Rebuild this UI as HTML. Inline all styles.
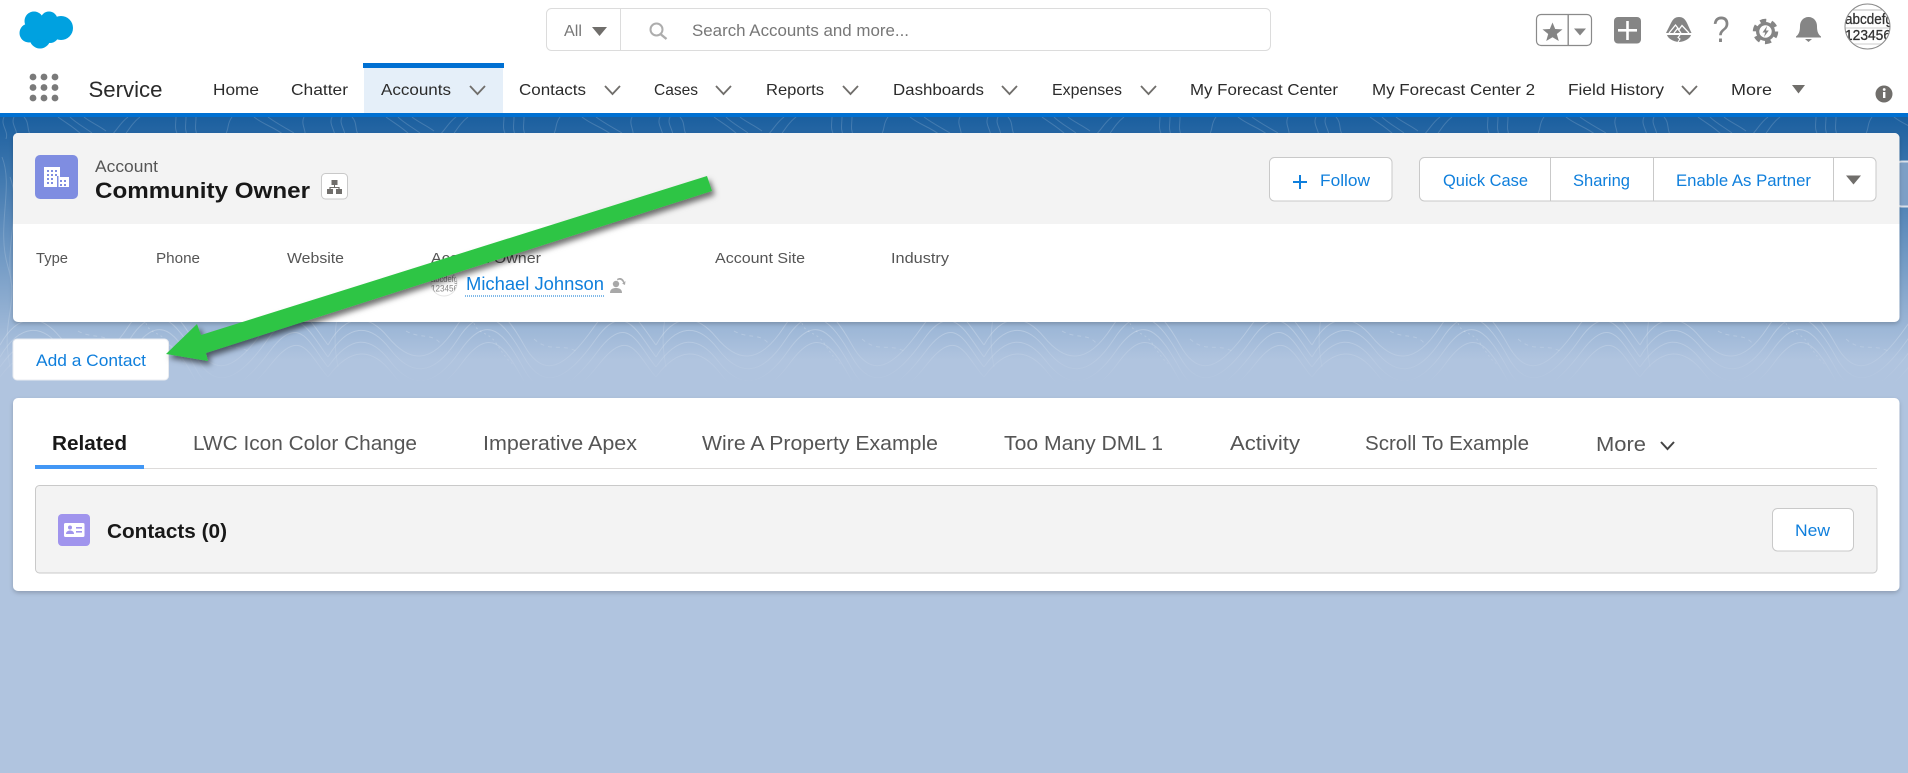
<!DOCTYPE html>
<html lang="en">
<head>
<meta charset="utf-8">
<title>Community Owner | Account | Service</title>
<style>
html,body{margin:0;padding:0;width:1908px;height:773px;overflow:hidden;background:#b0c4df}
svg{display:block}
text{font-family:"Liberation Sans",sans-serif;white-space:pre}
.nav{font-size:16px;fill:#2b2b2b}
.lab{font-size:15px;fill:#555}
.btn{font-size:16.5px;fill:#0f7fdc}
.tab{font-size:20px;fill:#555}
.b{font-weight:bold;fill:#181818}
.chev{fill:none;stroke:#706e6b;stroke-width:1.8}
.ico{fill:#858585}
</style>
</head>
<body>
<svg width="1908" height="773" viewBox="0 0 1908 773" xmlns="http://www.w3.org/2000/svg">
<defs>
<linearGradient id="bg" gradientUnits="userSpaceOnUse" x1="0" y1="117" x2="0" y2="360">
<stop offset="0" stop-color="#1b5f9f"/><stop offset="1" stop-color="#b0c4df"/>
</linearGradient>
<linearGradient id="fade" gradientUnits="userSpaceOnUse" x1="0" y1="117" x2="0" y2="385">
<stop offset="0" stop-color="#fff"/><stop offset=".8" stop-color="#fff"/><stop offset="1" stop-color="#000"/>
</linearGradient>
<mask id="fm" maskUnits="userSpaceOnUse" x="0" y="117" width="1908" height="270"><rect x="0" y="117" width="1908" height="270" fill="url(#fade)"/></mask>
<pattern id="topo" patternUnits="userSpaceOnUse" x="0" y="117" width="328" height="270">
<g fill="none" stroke="#fff" stroke-width="1">
<path stroke-opacity=".16" d="M4 0C0 8 9 14 6 22M14 0C10 8 20 14 16 24M24 0C30 6 26 14 32 20M58 0C66 6 74 10 82 18M70 0C76 6 84 10 92 16M84 0C90 5 98 8 106 14M128 0C120 6 118 12 110 20M140 0C132 6 128 14 122 22M176 0C176 6 174 12 178 18M186 0C186 8 184 12 188 20M196 0C196 8 194 12 198 20M232 0C226 8 230 12 224 20M254 0C264 8 274 10 284 18M268 0C276 6 284 10 294 16M304 0C300 8 308 14 304 22"/>
<path stroke-opacity=".16" d="M2 40C14 70 -4 110 8 150S0 200 10 250M10 60C22 90 4 130 12 170"/>
<g stroke-opacity=".24">
<path d="M0 240C20 206 42 206 62 232S104 262 130 222S176 204 196 240S240 262 268 222S310 216 328 240"/>
<path d="M0 250C22 218 42 218 62 244S104 274 132 234S176 216 196 252S240 274 270 234S310 228 328 250"/>
<path d="M0 260C22 230 44 230 64 256S106 284 134 246S176 228 196 264S242 284 272 246S310 240 328 260"/>
<path d="M0 228C18 196 40 196 60 220S102 250 128 210S176 192 196 228S238 250 266 210S310 204 328 228"/>
</g>
<path stroke-opacity=".22" d="M78 214C92 222 104 216 112 226M206 222C222 236 232 226 248 234" stroke-dasharray="4 4"/>
<path stroke-opacity=".22" d="M146 206C150 218 160 214 168 226S180 244 186 248" stroke-dasharray="2 3"/>
</g>
</pattern>
<filter id="sh" x="-2%" y="-10%" width="104%" height="125%"><feDropShadow dx="0" dy="2" stdDeviation="2" flood-color="#000" flood-opacity=".2"/></filter>
<filter id="ash" x="-10%" y="-20%" width="120%" height="140%"><feDropShadow dx="3" dy="4" stdDeviation="3" flood-color="#000" flood-opacity=".55"/></filter>
<clipPath id="av1"><circle cx="1867.5" cy="26.5" r="22"/></clipPath>
<clipPath id="av2"><circle cx="444" cy="283" r="13"/></clipPath>
</defs>

<!-- page background -->
<rect x="0" y="117" width="1908" height="656" fill="#b0c4df"/>
<rect x="0" y="117" width="1908" height="243" fill="url(#bg)"/>
<rect x="0" y="117" width="1908" height="270" fill="url(#topo)" mask="url(#fm)"/>

<!-- global header -->
<rect x="0" y="0" width="1908" height="113" fill="#fff"/>
<rect x="0" y="113" width="1908" height="4" fill="#0070d2"/>
<g fill="#00a1e0">
<circle cx="29" cy="33" r="9.5"/><circle cx="34" cy="21" r="9.5"/><circle cx="49" cy="20" r="8.5"/><circle cx="61" cy="28" r="12"/><circle cx="40" cy="38" r="10.5"/><circle cx="50" cy="34" r="9"/><circle cx="42" cy="28" r="12"/>
</g>

<!-- search -->
<rect x="546.5" y="8.5" width="724" height="42" rx="5" fill="#fff" stroke="#dcdcdc"/>
<path d="M620.5 8.500V50.500" stroke="#dcdcdc"/>
<text x="564" y="36" font-size="16" fill="#777" textLength="18" lengthAdjust="spacingAndGlyphs">All</text>
<polygon points="592,27 607,27 599.5,36" fill="#706e6b"/>
<circle cx="656.500" cy="29.500" r="6" fill="none" stroke="#adadad" stroke-width="2"/>
<line x1="661" y1="34.500" x2="666.500" y2="39" stroke="#adadad" stroke-width="2.4"/>
<text x="692" y="36" font-size="16.5" fill="#777" textLength="217" lengthAdjust="spacingAndGlyphs">Search Accounts and more...</text>

<!-- header actions -->
<rect x="1536.5" y="14.5" width="55" height="31" rx="4.5" fill="#fff" stroke="#8a8a8a" stroke-width="1.2"/>
<rect x="1567.5" y="14.5" width="1.4" height="31" fill="#8a8a8a"/>
<polygon class="ico" points="1552.500,22.500 1555.200,29 1562.500,29.400 1556.800,34 1558.800,41 1552.500,37.200 1546.200,41 1548.200,34 1542.500,29.400 1549.800,29"/>
<polygon class="ico" points="1574,28.500 1586,28.500 1580,35.500"/>
<rect class="ico" x="1614" y="17" width="27" height="26.500" rx="4"/>
<rect x="1618" y="29" width="19" height="2.600" fill="#fff"/><rect x="1626.200" y="21" width="2.600" height="19" fill="#fff"/>
<path class="ico" d="M1679 17C1683 17 1685 19 1687 23L1691.500 33H1666L1671 23C1673 19 1675 17 1679 17Z"/>
<path class="ico" d="M1667 35H1691C1690 38.500 1685 41.500 1679 42C1673 41.500 1668 38.500 1667 35Z"/>
<path d="M1669 33L1675.500 25L1679 29.500L1682 25.500L1689 33M1674 33L1677.500 28.500L1681 33" fill="none" stroke="#fff" stroke-width="1.300"/>
<path d="M1680 35L1678 37.500L1680 39L1678 42" fill="none" stroke="#fff" stroke-width="1.100"/>
<text x="1712.500" y="42" font-size="36" fill="#858585" textLength="17" lengthAdjust="spacingAndGlyphs">?</text>
<circle cx="1765.5" cy="31.500" r="9.500" class="ico"/>
<circle cx="1765.5" cy="31.500" r="11" fill="none" stroke="#858585" stroke-width="3.400" stroke-dasharray="6.200 5.320"/>
<circle cx="1765.5" cy="31.500" r="6.200" fill="#fff"/>
<polygon class="ico" points="1767,26 1762.500,32.500 1765.200,32.500 1764,37 1768.800,30.500 1766,30.500"/>
<path class="ico" d="M1796 36.500C1799.500 34 1800 30 1800 26C1800 21 1803.500 17 1808.500 17S1817 21 1817 26C1817 30 1817.500 34 1821 36.500V37.500H1796Z"/>
<path class="ico" d="M1805 39H1812L1808.500 42Z"/>
<circle cx="1867.500" cy="26.500" r="22.500" fill="#fff" stroke="#8a8a8a" stroke-width="1"/>
<g clip-path="url(#av1)">
<line x1="1845" y1="10" x2="1890" y2="10" stroke="#bbb"/><line x1="1845" y1="28" x2="1890" y2="28" stroke="#ccc"/><line x1="1845" y1="44" x2="1890" y2="44" stroke="#ccc"/>
<text x="1845" y="24" font-size="14.500" fill="#333" stroke="#333" stroke-width=".3" textLength="48" lengthAdjust="spacingAndGlyphs">abcdefg</text>
<text x="1845" y="40" font-size="14.500" fill="#333" stroke="#333" stroke-width=".3" textLength="46" lengthAdjust="spacingAndGlyphs">123456</text>
</g>

<!-- app launcher -->
<g fill="#7a7a7a">
<circle cx="33" cy="77" r="3.400"/><circle cx="44" cy="77" r="3.400"/><circle cx="55" cy="77" r="3.400"/>
<circle cx="33" cy="87.500" r="3.400"/><circle cx="44" cy="87.500" r="3.400"/><circle cx="55" cy="87.500" r="3.400"/>
<circle cx="33" cy="98" r="3.400"/><circle cx="44" cy="98" r="3.400"/><circle cx="55" cy="98" r="3.400"/>
</g>
<text x="88.500" y="97" font-size="22" fill="#2b2b2b" textLength="74" lengthAdjust="spacingAndGlyphs">Service</text>

<!-- nav -->
<rect x="364" y="68" width="139" height="45" fill="#e5eff9"/>
<rect x="363" y="63" width="141" height="5" fill="#0070d2"/>
<text class="nav" x="213" y="95" textLength="46" lengthAdjust="spacingAndGlyphs">Home</text>
<text class="nav" x="291" y="95" textLength="57" lengthAdjust="spacingAndGlyphs">Chatter</text>
<text class="nav" x="381" y="95" textLength="70" lengthAdjust="spacingAndGlyphs">Accounts</text>
<polyline class="chev" points="470,86 477.500,94 485,86"/>
<text class="nav" x="519" y="95" textLength="67" lengthAdjust="spacingAndGlyphs">Contacts</text>
<polyline class="chev" points="605,86 612.500,94 620,86"/>
<text class="nav" x="654" y="95" textLength="44" lengthAdjust="spacingAndGlyphs">Cases</text>
<polyline class="chev" points="716,86 723.500,94 731,86"/>
<text class="nav" x="766" y="95" textLength="58" lengthAdjust="spacingAndGlyphs">Reports</text>
<polyline class="chev" points="843,86 850.500,94 858,86"/>
<text class="nav" x="893" y="95" textLength="91" lengthAdjust="spacingAndGlyphs">Dashboards</text>
<polyline class="chev" points="1002,86 1009.500,94 1017,86"/>
<text class="nav" x="1052" y="95" textLength="70" lengthAdjust="spacingAndGlyphs">Expenses</text>
<polyline class="chev" points="1141,86 1148.500,94 1156,86"/>
<text class="nav" x="1190" y="95" textLength="148" lengthAdjust="spacingAndGlyphs">My Forecast Center</text>
<text class="nav" x="1372" y="95" textLength="163" lengthAdjust="spacingAndGlyphs">My Forecast Center 2</text>
<text class="nav" x="1568" y="95" textLength="96" lengthAdjust="spacingAndGlyphs">Field History</text>
<polyline class="chev" points="1682,86 1689.500,94 1697,86"/>
<text class="nav" x="1731" y="95" textLength="41" lengthAdjust="spacingAndGlyphs">More</text>
<polygon points="1792,85 1805,85 1798.500,93.500" fill="#706e6b"/>
<circle cx="1884" cy="94" r="8.500" fill="#706e6b"/>
<rect x="1883" y="92" width="2.400" height="6" fill="#fff"/><circle cx="1884.200" cy="89.500" r="1.400" fill="#fff"/>

<!-- right edge handle -->
<rect x="1896.500" y="161.500" width="24" height="45" rx="5" fill="#7d9fc6" stroke="#d9e0ea" stroke-width="2"/>

<!-- highlights card -->
<rect x="13" y="133" width="1886.500" height="189" rx="5" fill="#fff" filter="url(#sh)"/>
<path d="M13 224V138a5 5 0 0 1 5-5H1894.500a5 5 0 0 1 5 5V224Z" fill="#f3f3f3"/>
<rect x="35" y="155" width="43" height="44" rx="5" fill="#7f8de1"/>
<path d="M44 167H60V177H69V187H44Z" fill="#fff"/>
<g fill="#7f8de1">
<rect x="47" y="170" width="2" height="2"/><rect x="51" y="170" width="2" height="2"/><rect x="55" y="170" width="2" height="2"/>
<rect x="47" y="174" width="2" height="2"/><rect x="51" y="174" width="2" height="2"/><rect x="55" y="174" width="2" height="2"/>
<rect x="47" y="178" width="2" height="2"/><rect x="51" y="178" width="2" height="2"/>
<rect x="47" y="182" width="2" height="2"/><rect x="51" y="182" width="2" height="2"/>
<rect x="57" y="176" width="1.500" height="11"/>
<rect x="60" y="180" width="2" height="2"/><rect x="64" y="180" width="2" height="2"/><rect x="60" y="184" width="2" height="2"/><rect x="64" y="184" width="2" height="2"/>
</g>
<text x="95" y="172" font-size="17" fill="#555" textLength="63" lengthAdjust="spacingAndGlyphs">Account</text>
<text x="95" y="198" font-size="22" class="b" textLength="215" lengthAdjust="spacingAndGlyphs">Community Owner</text>
<rect x="321.500" y="173.500" width="26" height="25.500" rx="4" fill="#fff" stroke="#c9c9c9"/>
<g fill="#706e6b">
<rect x="331.500" y="180" width="6" height="5"/><rect x="327" y="189" width="6" height="5"/><rect x="336" y="189" width="6" height="5"/>
<path d="M334 185H335V187H339.600V189H338.400V188H330.600V189H329.400V187H334Z"/>
</g>

<!-- header buttons -->
<rect x="1269.500" y="157.500" width="122.500" height="43.500" rx="5" fill="#fff" stroke="#c9c9c9"/>
<rect x="1293" y="181" width="14" height="2" fill="#0f7fdc"/><rect x="1299" y="175" width="2" height="14" fill="#0f7fdc"/>
<text class="btn" x="1320" y="186" textLength="50" lengthAdjust="spacingAndGlyphs">Follow</text>
<rect x="1419.500" y="157.500" width="456.500" height="43.500" rx="5" fill="#fff" stroke="#c9c9c9"/>
<rect x="1550" y="158" width="1" height="43" fill="#c9c9c9"/><rect x="1653" y="158" width="1" height="43" fill="#c9c9c9"/><rect x="1833" y="158" width="1" height="43" fill="#c9c9c9"/>
<text class="btn" x="1443" y="186" textLength="85" lengthAdjust="spacingAndGlyphs">Quick Case</text>
<text class="btn" x="1573" y="186" textLength="57" lengthAdjust="spacingAndGlyphs">Sharing</text>
<text class="btn" x="1676" y="186" textLength="135" lengthAdjust="spacingAndGlyphs">Enable As Partner</text>
<polygon points="1846,175.500 1861,175.500 1853.500,184.500" fill="#706e6b"/>

<!-- highlights fields -->
<text class="lab" x="36" y="263" textLength="32" lengthAdjust="spacingAndGlyphs">Type</text>
<text class="lab" x="156" y="263" textLength="44" lengthAdjust="spacingAndGlyphs">Phone</text>
<text class="lab" x="287" y="263" textLength="57" lengthAdjust="spacingAndGlyphs">Website</text>
<text class="lab" x="431" y="263" textLength="110" lengthAdjust="spacingAndGlyphs">Account Owner</text>
<text class="lab" x="715" y="263" textLength="90" lengthAdjust="spacingAndGlyphs">Account Site</text>
<text class="lab" x="891" y="263" textLength="58" lengthAdjust="spacingAndGlyphs">Industry</text>
<circle cx="444" cy="283" r="13" fill="#fff" stroke="#e4e4e4"/>
<g clip-path="url(#av2)">
<text x="431" y="282" font-size="9" fill="#888" textLength="27" lengthAdjust="spacingAndGlyphs">abcdefg</text>
<text x="431" y="291.500" font-size="9" fill="#888" textLength="27" lengthAdjust="spacingAndGlyphs">123456</text>
</g>
<text x="466" y="290" font-size="18" fill="#0f7fdc" textLength="138" lengthAdjust="spacingAndGlyphs">Michael Johnson</text>
<line x1="465" y1="296" x2="604" y2="296" stroke="#0176d3" stroke-width="1" stroke-dasharray="1 1"/>
<g fill="#a8a8a8">
<circle cx="616" cy="284" r="3.200"/><path d="M610 293C610 289 613 288 616 288S622 289 622 293Z"/>
<path d="M617 279C620 277 623 278 624.500 282L625.500 281L625 285L622 283.500L623.300 283C622 280 620 279 617.500 280.500Z"/>
</g>

<!-- add a contact -->
<rect x="13" y="339" width="155.500" height="41" rx="4" fill="#fff" stroke="#e8ebf0"/>
<text class="btn" x="36" y="366" textLength="110" lengthAdjust="spacingAndGlyphs">Add a Contact</text>

<!-- tabs card -->
<rect x="13" y="398" width="1886.500" height="193" rx="5" fill="#fff" filter="url(#sh)"/>
<text x="52" y="450" font-size="20" class="b" textLength="75" lengthAdjust="spacingAndGlyphs">Related</text>
<text class="tab" x="193" y="450" textLength="224" lengthAdjust="spacingAndGlyphs">LWC Icon Color Change</text>
<text class="tab" x="483" y="450" textLength="154" lengthAdjust="spacingAndGlyphs">Imperative Apex</text>
<text class="tab" x="702" y="450" textLength="236" lengthAdjust="spacingAndGlyphs">Wire A Property Example</text>
<text class="tab" x="1004" y="450" textLength="159" lengthAdjust="spacingAndGlyphs">Too Many DML 1</text>
<text class="tab" x="1230" y="450" textLength="70" lengthAdjust="spacingAndGlyphs">Activity</text>
<text class="tab" x="1365" y="450" textLength="164" lengthAdjust="spacingAndGlyphs">Scroll To Example</text>
<text class="tab" x="1596" y="451" textLength="50" lengthAdjust="spacingAndGlyphs">More</text>
<polyline points="1661,442 1667.500,449 1674,442" fill="none" stroke="#444" stroke-width="2"/>
<rect x="35" y="468" width="1842" height="1" fill="#dddbda"/>
<rect x="35" y="465" width="109" height="4" fill="#4297f5"/>

<!-- related list -->
<rect x="35.500" y="485.500" width="1841.500" height="87.500" rx="4" fill="#f3f3f3" stroke="#c9c9c9"/>
<rect x="58" y="514" width="32" height="32" rx="4" fill="#a094ed"/>
<rect x="64" y="523" width="20.500" height="14" rx="1.500" fill="#fff"/>
<g fill="#a094ed">
<circle cx="70" cy="527.500" r="2"/><path d="M66 534C66 531.500 68 530.500 70 530.500S74 531.500 74 534Z"/>
<rect x="76" y="527" width="6" height="1.600"/><rect x="76" y="531" width="6" height="1.600"/>
</g>
<text x="107" y="538" font-size="20" class="b" textLength="120" lengthAdjust="spacingAndGlyphs">Contacts (0)</text>
<rect x="1772.500" y="508.500" width="81" height="42.500" rx="5" fill="#fff" stroke="#c9c9c9"/>
<text class="btn" x="1795" y="536" textLength="35" lengthAdjust="spacingAndGlyphs">New</text>

<!-- annotation arrow -->
<polygon points="707,176 712,191 206,353 208,361 166,354 197,324 201,335" fill="#2fc545" filter="url(#ash)"/>
</svg>
</body>
</html>
